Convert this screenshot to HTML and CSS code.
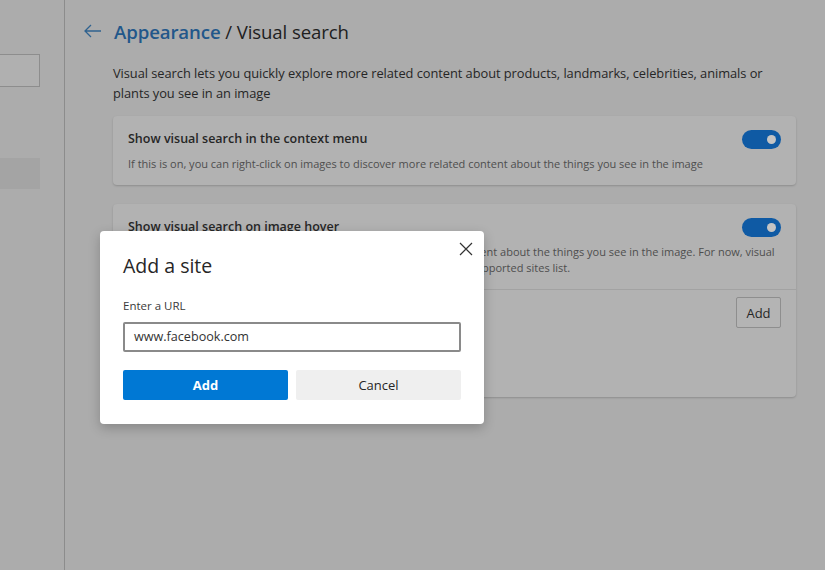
FILE: index.html
```html
<!DOCTYPE html>
<html lang="en">
<head>
<meta charset="utf-8">
<title>Visual search</title>
<link rel="stylesheet" href="styles.css">
</head>
<body>
<div class="app">
  <aside class="sidebar">
    <div class="side-search"></div>
    <div class="side-active"></div>
  </aside>
  <main class="main">
    <header class="header">
      <svg class="back" width="18" height="14" viewBox="0 0 18 14"><path d="M7 1 L1 7 L7 13 M1 7 H17" fill="none" stroke="#2f628f" stroke-width="1.3"/></svg>
      <h1 class="title"><span class="crumb">Appearance</span> / Visual search</h1>
    </header>
    <div class="content">
      <p class="intro">Visual search lets you quickly explore more related content about products, landmarks, celebrities, animals or plants you see in an image</p>
      <section class="card">
        <div class="row">
          <div class="row-head">
            <div class="row-title">Show visual search in the context menu</div>
            <div class="toggle"><span class="knob"></span></div>
          </div>
          <div class="row-desc">If this is on, you can right-click on images to discover more related content about the things you see in the image</div>
        </div>
      </section>
      <section class="card card-tall">
        <div class="row">
          <div class="row-head">
            <div class="row-title">Show visual search on image hover</div>
            <div class="toggle"><span class="knob"></span></div>
          </div>
          <div class="row-desc">If this is on, you can hover over images to discover more related content about the things you see in the image. For now, visual<br>search on image hover is only available on websites that are in the supported sites list.</div>
        </div>
        <div class="sites">
          <span class="sites-label">Supported sites</span>
          <button class="btn-small">Add</button>
        </div>
      </section>
    </div>
  </main>
</div>
<div class="dialog">
  <svg class="close" width="14" height="14" viewBox="0 0 14 14"><path d="M1 1 L13 13 M13 1 L1 13" stroke="#333" stroke-width="1.2" fill="none"/></svg>
  <h2 class="dlg-title">Add a site</h2>
  <label class="dlg-label">Enter a URL</label>
  <div class="dlg-input">www.facebook.com</div>
  <div class="dlg-actions">
    <button class="btn btn-primary">Add</button>
    <button class="btn btn-secondary">Cancel</button>
  </div>
</div>
</body>
</html>
```
FILE: styles.css
```css
* { box-sizing: border-box; }
html, body { margin: 0; padding: 0; }
body {
  width: 825px;
  height: 570px;
  overflow: hidden;
  background: #acacac;
  font-family: "Open Sans", "Noto Sans", sans-serif;
  color: #262626;
  position: relative;
}
.app { display: flex; height: 570px; }
.sidebar {
  width: 65px;
  flex: none;
  border-right: 1px solid #8c8c8c;
}
.side-search {
  margin-top: 54px;
  width: 40px;
  height: 33px;
  border: 1px solid #8d8d8d;
  border-left: none;
  background: #b0b0b0;
}
.side-active {
  margin-top: 71px;
  width: 40px;
  height: 31px;
  background: #a4a4a4;
}
.main { flex: 1; padding: 19px 29px 0 19px; }
.header { display: flex; align-items: center; height: 24px; }
.back { margin-right: 12px; margin-top: 0; }
.title {
  margin: 0;
  font-size: 18.6px;
  font-weight: 400;
  color: #202020;
  letter-spacing: -0.1px;
}
.crumb { color: #22578a; font-weight: 600; }
.content { padding-left: 29px; }
.intro {
  margin: 20px 0 13px 0;
  font-size: 12.85px;
  line-height: 20px;
  color: #262626;
  letter-spacing: -0.05px;
}
.card {
  background: #b2b2b2;
  border-radius: 4px;
  box-shadow: 0 1px 2px rgba(0,0,0,0.18);
  margin-bottom: 19px;
}
.card-tall { height: 193px; }
.row { padding: 13px 15px 13px 15px; }
.row-head {
  display: flex;
  align-items: center;
  justify-content: space-between;
  height: 20px;
}
.row-title {
  font-size: 12.5px;
  font-weight: 600;
  line-height: 20px;
  color: #262626;
}
.row-desc {
  margin-top: 7px;
  font-size: 11px;
  line-height: 16px;
  color: #4e4e4e;
  white-space: nowrap;
}
.toggle {
  width: 39px;
  height: 19px;
  border-radius: 10px;
  background: #0f5aa4;
  position: relative;
  flex: none;
}
.knob {
  position: absolute;
  right: 5px;
  top: 5px;
  width: 9px;
  height: 9px;
  border-radius: 50%;
  background: #c4c4c4;
}
.sites {
  border-top: 1px solid #a2a2a2;
  display: flex;
  justify-content: space-between;
  align-items: center;
  padding: 7px 15px 0 15px;
}
.sites-label { font-size: 13px; color: #262626; }
.btn-small {
  width: 45px;
  height: 31px;
  background: #b4b4b4;
  border: 1px solid #8e8e8e;
  border-radius: 2px;
  font-family: "Open Sans", "Noto Sans", sans-serif;
  font-size: 13px;
  color: #262626;
  padding: 0;
}
.dialog {
  position: absolute;
  left: 100px;
  top: 231px;
  width: 384px;
  height: 193px;
  background: #ffffff;
  border-radius: 4px;
  box-shadow: 0 4px 12px rgba(0,0,0,0.22);
  padding: 21px 23px 23px 23px;
}
.close { position: absolute; right: 11px; top: 11px; }
.dlg-title {
  margin: 0;
  font-size: 19.5px;
  font-weight: 400;
  line-height: 28px;
  color: #262626;
}
.dlg-label {
  display: block;
  margin-top: 18px;
  font-size: 11.5px;
  line-height: 16px;
  color: #3a3a3a;
}
.dlg-input {
  margin-top: 8px;
  height: 30px;
  border: 2px solid #8a8a8a;
  border-radius: 2px;
  padding: 0 9px;
  font-size: 12.6px;
  line-height: 26px;
  color: #333;
}
.dlg-actions { display: flex; gap: 8px; margin-top: 18px; }
.btn {
  flex: 1;
  height: 30px;
  border: none;
  border-radius: 2px;
  font-family: "Open Sans", "Noto Sans", sans-serif;
  font-size: 13px;
  padding: 0;
}
.btn-primary { background: #0078d4; color: #fff; font-weight: 700; }
.btn-secondary { background: #efefef; color: #262626; }
```
